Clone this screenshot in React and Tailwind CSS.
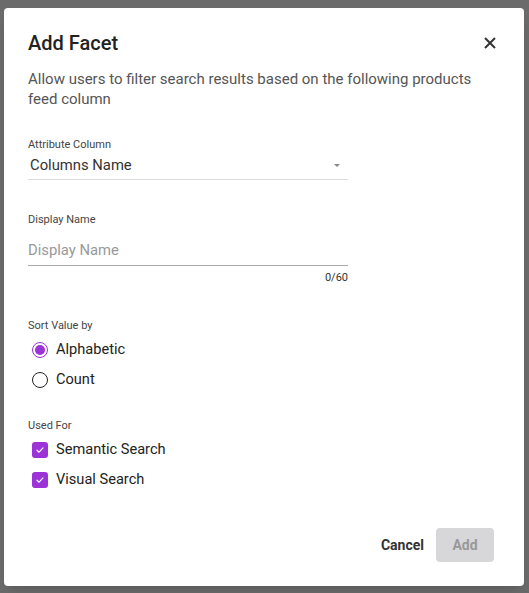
import React, { useState } from 'react';

function Radio({ checked, label, onChange }) {
    return (
        <label className="flex items-center h-[30px] pl-[4px] cursor-pointer" onClick={onChange}>
            {checked ? (
                <span className="w-[16px] h-[16px] rounded-full border-[1.5px] border-[#9c33d6] flex items-center justify-center">
                    <span className="w-[10px] h-[10px] rounded-full bg-[#9c33d6]" />
                </span>
            ) : (
                <span className="w-[16px] h-[16px] rounded-full border-[1.5px] border-[#222]" />
            )}
            <span className="ml-[8px] text-[14.6px] text-[#222]">{label}</span>
        </label>
    );
}

function Check({ checked, label, onChange }) {
    return (
        <label className="flex items-center h-[30px] pl-[4px] cursor-pointer" onClick={onChange}>
            <span className={`w-[16px] h-[16px] rounded-[3px] flex items-center justify-center ${checked ? 'bg-[#9c33d6]' : 'border-[1.5px] border-[#222]'}`}>
                {checked && (
                    <svg width="10" height="10" viewBox="0 0 10 10" fill="none">
                        <path d="M2 5.2 L4.1 7.2 L8 2.9" stroke="white" strokeWidth="1.2" strokeLinecap="round" strokeLinejoin="round" />
                    </svg>
                )}
            </span>
            <span className="ml-[8px] text-[14.6px] text-[#222]">{label}</span>
        </label>
    );
}

export default function App() {
    const [sort, setSort] = useState('alpha');
    const [used, setUsed] = useState({ semantic: true, visual: true });

    return (
        <div className="w-[529px] h-[593px] bg-[#6b6b6b] pt-[8px] pl-[4px] font-['Roboto',_sans-serif] overflow-hidden">
            {/* Dialog */}
            <div className="w-[520px] h-[578px] bg-white rounded-[4px] shadow-lg px-[24px] pt-[23px] flex flex-col">
                <div className="flex items-center justify-between h-[24px]">
                    <h2 className="text-[20px] leading-[24px] font-medium text-[#222]">Add Facet</h2>
                    <button className="mr-[4px] text-[#333]">
                        <svg width="12" height="12" viewBox="0 0 12 12">
                            <path d="M1 1 L11 11 M11 1 L1 11" stroke="currentColor" strokeWidth="2" />
                        </svg>
                    </button>
                </div>
                <p className="mt-[14px] text-[15px] leading-[20px] text-[#555] w-[460px]">
                    Allow users to filter search results based on the following products feed column
                </p>

                <div className="w-[320px]">
                    <div className="mt-[29px] text-[11px] leading-[14px] text-[#444]">Attribute Column</div>
                    <div className="h-[28px] flex items-center justify-between border-b border-[#ddd] pl-[2px] pr-[8px]">
                        <span className="text-[14.8px] text-[#333]">Columns Name</span>
                        <span className="w-0 h-0 border-l-[3px] border-r-[3px] border-t-[3px] border-l-transparent border-r-transparent border-t-[#888]" />
                    </div>

                    <div className="mt-[33px] text-[11px] leading-[14px] text-[#444]">Display Name</div>
                    <div className="mt-[13px] pb-[5px] border-b border-[#aaa] text-[14.8px] leading-[20px] text-[#999]">
                        Display Name
                    </div>
                    <div className="mt-[5px] text-right text-[11px] leading-[14px] text-[#333]">0/60</div>
                </div>

                <div className="mt-[34px] text-[11px] leading-[14px] text-[#444]">Sort Value by</div>
                <div className="mt-[2px] flex flex-col">
                    <Radio checked={sort === 'alpha'} label="Alphabetic" onChange={() => setSort('alpha')} />
                    <Radio checked={sort === 'count'} label="Count" onChange={() => setSort('count')} />
                </div>

                <div className="mt-[24px] text-[11px] leading-[14px] text-[#444]">Used For</div>
                <div className="mt-[2px] flex flex-col">
                    <Check checked={used.semantic} label="Semantic Search" onChange={() => setUsed({ ...used, semantic: !used.semantic })} />
                    <Check checked={used.visual} label="Visual Search" onChange={() => setUsed({ ...used, visual: !used.visual })} />
                </div>

                <div className="mt-[33px] flex justify-end items-center gap-[12px] pr-[6px]">
                    <button className="text-[14px] font-bold text-[#333]">Cancel</button>
                    <button disabled className="w-[58px] h-[34px] rounded-[4px] bg-[#d7d7da] text-[14px] font-bold text-[#999]">
                        Add
                    </button>
                </div>
            </div>
        </div>
    );
}
